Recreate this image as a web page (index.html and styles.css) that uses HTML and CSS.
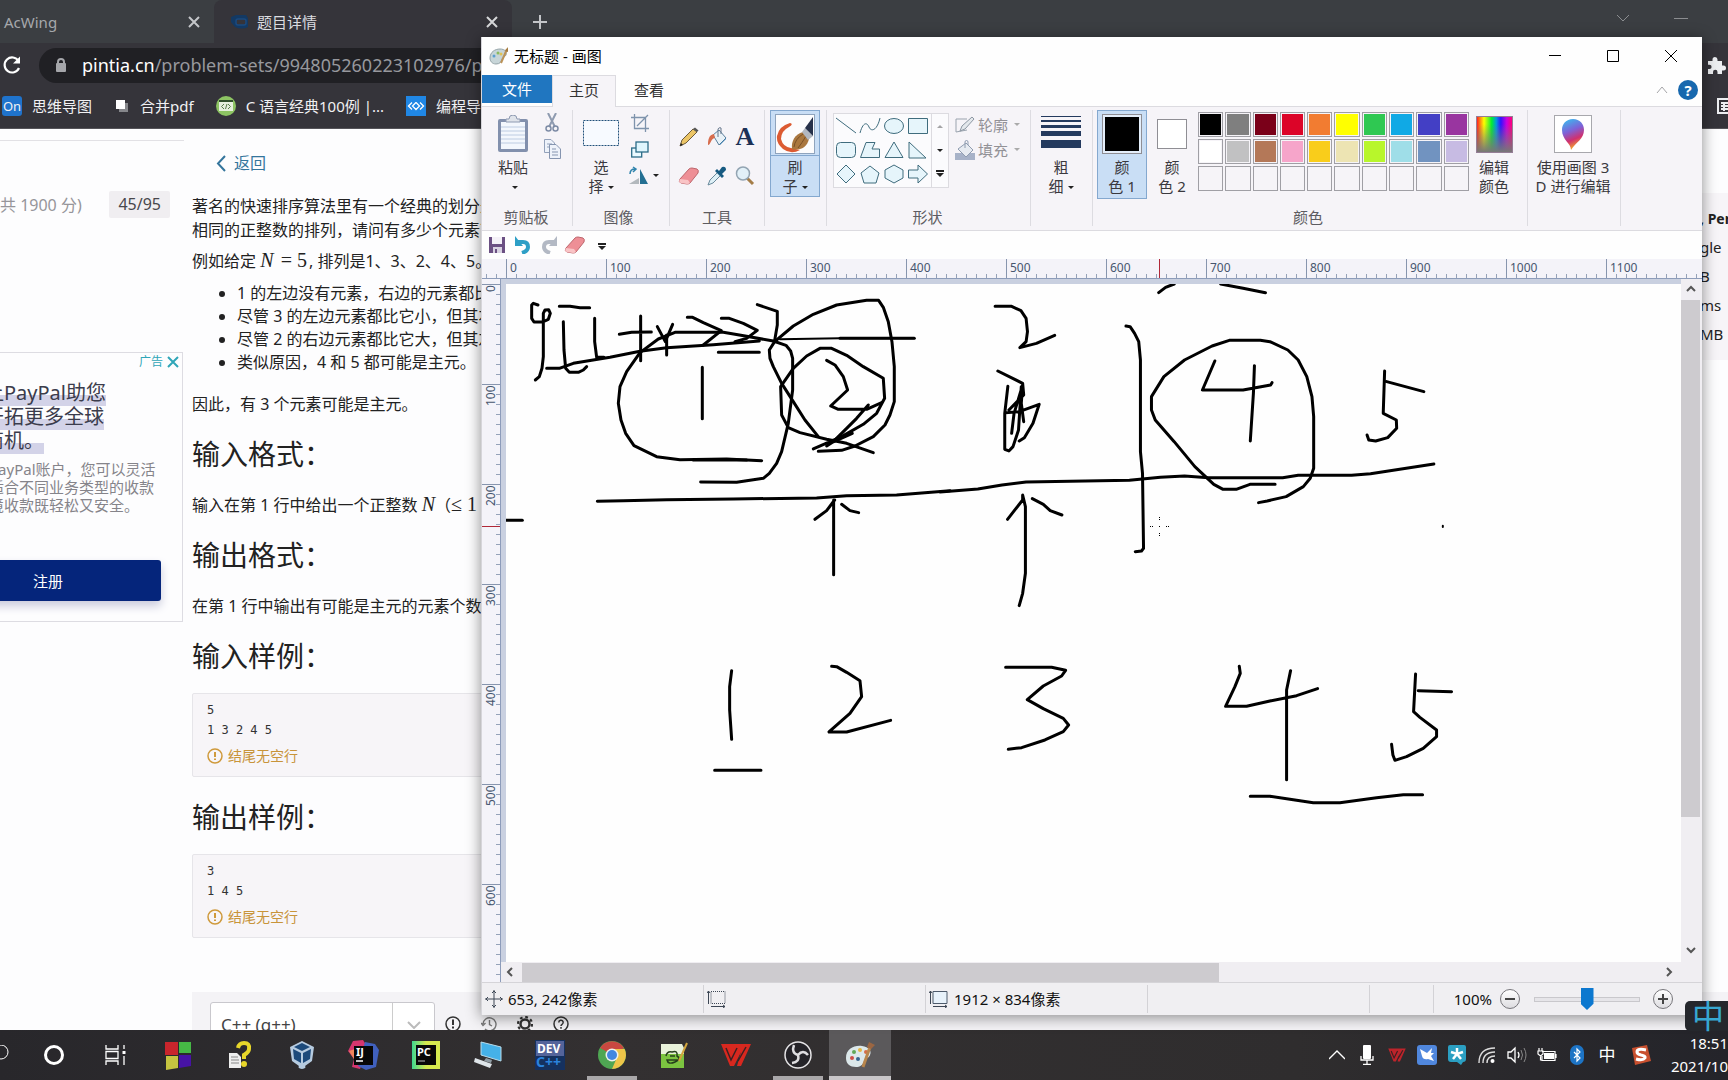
FILE: index.html
```html
<!DOCTYPE html>
<html lang="zh-CN">
<head>
    <meta charset="UTF-8">
    <meta name="viewport" content="width=device-width, initial-scale=1.0">
    <title>题目详情</title>
    <link rel="stylesheet" href="styles.css">
</head>
<body>
    <div class="desktop">
        <!-- Browser -->
        <div class="browser">
            <div class="tab-strip">
                <div class="tab">
                    <span class="tab-title">AcWing</span>
                    <button class="tab-close" aria-label="关闭"><svg width="12" height="12" viewBox="0 0 12 12"><path d="M1 1L11 11M11 1L1 11" stroke="#c4c6c9" stroke-width="2"/></svg></button>
                </div>
                <div class="tab active">
                    <svg width="20" height="18" viewBox="0 0 20 18"><path d="M1 4L6 2H16L18 5V14Q12 17 5 14L1 9z" fill="#133963"/><rect x="6" y="6" width="10" height="6" rx="2" fill="#35343a" stroke="#1a4a80" stroke-width="1.500"/></svg>
                    <span class="tab-title">题目详情</span>
                    <button class="tab-close" aria-label="关闭"><svg width="12" height="12" viewBox="0 0 12 12"><path d="M1 1L11 11M11 1L1 11" stroke="#d6d7d9" stroke-width="2"/></svg></button>
                </div>
                <button class="new-tab" aria-label="新标签页"><svg width="14" height="14" viewBox="0 0 14 14"><path d="M7 0V14M0 7H14" stroke="#c4c6c9" stroke-width="2"/></svg></button>
                <div class="browser-controls">
                    <svg width="14" height="8" viewBox="0 0 14 8"><path d="M1 1L7 7L13 1" fill="none" stroke="#8b8d90"/></svg>
                    <svg width="14" height="8" viewBox="0 0 14 8"><path d="M0 4.500H14" stroke="#8b8d90"/></svg>
                </div>
            </div>
            <div class="toolbar">
                <button class="reload" aria-label="刷新"><svg width="20" height="20" viewBox="0 0 20 20"><path d="M16.500 6A7.500 7.500 0 1 0 17 13" fill="none" stroke="#fff" stroke-width="2.200"/><path d="M18 1.500V8.500H11z" fill="#fff"/></svg></button>
                <div class="omnibox">
                    <svg width="12" height="15" viewBox="0 0 12 15"><rect x="1" y="5" width="10" height="9" rx="1" fill="#a5a6aa"/><path d="M3 6V4a3 3 0 0 1 6 0V6" fill="none" stroke="#a5a6aa" stroke-width="2"/></svg>
                    <span class="url"><b>pintia.cn</b>/problem-sets/994805260223102976/p</span>
                </div>
                <svg class="puzzle" width="20" height="20" viewBox="0 0 20 20"><path d="M2 6H6.500V4.500a2.500 2.500 0 0 1 5 0V6H16v4.500h1.500a2.500 2.500 0 0 1 0 5H16V19H11.500V17a2.200 2.200 0 0 0-4.500 0V19H2V14H3.500a2 2 0 0 0 0-4.200H2z" fill="#eceef1"/></svg>
            </div>
            <div class="bookmarks">
                <a href="#" class="mark"><span class="on-icon">On</span>思维导图</a>
                <a href="#" class="mark"><svg width="16" height="12" viewBox="-2 0 16 12"><rect x="3" y="3" width="9" height="9" fill="#85868a"/><rect width="9" height="9" fill="#fff"/></svg>合并pdf</a>
                <a href="#" class="mark"><svg width="20" height="20" viewBox="0 0 20 20"><circle cx="10" cy="10" r="10" fill="#8dc463"/><path d="M3 5H17V15H3z" fill="#e5efdc"/><path d="M3 4H17V6H3z" fill="#31502a"/><path d="M8 8L5.500 10.500L8 13M12 8L14.500 10.500L12 13M11 8L9.500 13" fill="none" stroke="#5b7d4b"/></svg>C 语言经典100例 |...</a>
                <a href="#" class="mark"><svg width="20" height="20" viewBox="0 0 20 20"><rect width="20" height="20" fill="#2087e5"/><path d="M6 6.500L2.500 10L6 13.500M10 6.500L6.500 10L10 13.500L13.500 10L10 6.500M14 6.500L17.500 10L14 13.500" fill="none" stroke="#fff" stroke-width="1.300"/></svg>编程导航</a>
                <svg class="reading-list" width="16" height="16" viewBox="0 0 16 16"><path d="M1 1H15V15H1zM4 5H13M4 8H13M4 11H13M7 4V13" fill="none" stroke="#eceef1" stroke-width="2"/></svg>
            </div>

            <div class="page">
                <aside class="sidebar">
                    <div class="score-row">
                        <span>共 1900 分)</span>
                        <span class="score-badge">45/95</span>
                    </div>
                    <div class="ad">
                        <div class="ad-mark">广告 <svg width="12" height="12" viewBox="0 0 12 12"><path d="M1 1L11 11M11 1L1 11" stroke="#2fa6b8" stroke-width="2"/></svg></div>
                        <p class="ad-title"><mark>让PayPal助您</mark><br><mark>开拓更多全球</mark><br><mark>商机。</mark></p>
                        <p class="ad-text">PayPal账户，您可以灵活<br>适合不同业务类型的收款<br>境收款既轻松又安全。</p>
                        <button class="ad-button">注册</button>
                    </div>
                </aside>
                <main class="problem">
                    <div class="problem-row">
                        <article>
                            <a href="#" class="back"><svg width="10" height="17" viewBox="0 0 10 17"><path d="M9 1L2 8.500L9 16" fill="none" stroke="#34759c" stroke-width="2"/></svg>返回</a>
                            <p class="intro">著名的快速排序算法里有一个经典的划分过<br>相同的正整数的排列，请问有多少个元素可</p>
                            <p class="example">例如给定 <i>N</i> <span class="math">= 5</span>, 排列是1、3、2、4、5。</p>
                            <ul>
                                <li>1 的左边没有元素，右边的元素都比</li>
                                <li>尽管 3 的左边元素都比它小，但其右</li>
                                <li>尽管 2 的右边元素都比它大，但其左</li>
                                <li>类似原因，4 和 5 都可能是主元。</li>
                            </ul>
                            <p>因此，有 3 个元素可能是主元。</p>
                            <h2>输入格式：</h2>
                            <p>输入在第 1 行中给出一个正整数 <i>N</i>（<span class="math">≤ 1</span></p>
                            <h2>输出格式：</h2>
                            <p>在第 1 行中输出有可能是主元的元素个数</p>
                            <h2>输入样例：</h2>
                            <div class="sample">
                                <pre>5
1 3 2 4 5</pre>
                                <div class="warn"><svg width="16" height="16" viewBox="0 0 16 16"><circle cx="8" cy="8" r="7" fill="none" stroke="#cf9a3c" stroke-width="1.500"/><path d="M8 4V9M8 10.500V12" stroke="#cf9a3c" stroke-width="2"/></svg>结尾无空行</div>
                            </div>
                            <h2>输出样例：</h2>
                            <div class="sample">
                                <pre>3
1 4 5</pre>
                                <div class="warn"><svg width="16" height="16" viewBox="0 0 16 16"><circle cx="8" cy="8" r="7" fill="none" stroke="#cf9a3c" stroke-width="1.500"/><path d="M8 4V9M8 10.500V12" stroke="#cf9a3c" stroke-width="2"/></svg>结尾无空行</div>
                            </div>
                        </article>
                        <aside class="info">
                            <div><strong>, Per</strong></div>
                            <div>gle</div>
                            <div>B</div>
                            <div>ms</div>
                            <div>MB</div>
                        </aside>
                    </div>
                    <div class="editor-bar">
                        <div class="lang">
                            <select aria-label="语言"><option>C++ (g++)</option></select>
                            <svg width="14" height="8" viewBox="0 0 14 8"><path d="M1 1L7 7L13 1" fill="none" stroke="#bbb" stroke-width="2"/></svg>
                        </div>
                        <button aria-label="提示"><svg width="16" height="16" viewBox="0 0 16 16"><circle cx="8" cy="8" r="7" fill="none" stroke="#333" stroke-width="1.500"/><path d="M8 3.500V9M8 10.500V12.500" stroke="#333" stroke-width="2"/></svg></button>
                        <button aria-label="历史"><svg width="16" height="16" viewBox="0 0 16 16"><path d="M2 8A6.500 6.500 0 1 1 4 13M0 7L2 9.500L4.500 7M8.500 4V8.500L11 10" fill="none" stroke="#777" stroke-width="1.400"/></svg></button>
                        <button aria-label="设置"><svg width="16" height="16" viewBox="0 0 16 16"><circle cx="8" cy="8" r="4.500" fill="none" stroke="#333" stroke-width="2.500"/><circle cx="8" cy="8" r="7" fill="none" stroke="#333" stroke-width="2.200" stroke-dasharray="2.750 2.750"/></svg></button>
                        <button aria-label="帮助"><svg width="16" height="16" viewBox="0 0 16 16"><circle cx="8" cy="8" r="7" fill="none" stroke="#333" stroke-width="1.500"/><path d="M5.800 6.500a2.200 2.200 0 1 1 3.300 1.800Q8 9 8 10M8 11V12.700" fill="none" stroke="#333" stroke-width="1.500"/></svg></button>
                    </div>
                </main>
            </div>
        </div>

        <!-- Paint -->
        <div class="paint">
            <div class="title-bar">
                <svg width="20" height="18" viewBox="0 0 20 18"><path d="M1 11C1 5 6 2 11 2c5 0 7 3 6 6-1 2-3 2-4 4-1 3-2 5-6 5-4 0-6-3-6-6z" fill="#c7d5d8" stroke="#95a4a8"/><circle cx="5" cy="9" r="1.500" fill="#5b9fd0"/><circle cx="9" cy="6" r="1.500" fill="#8abb5e"/><circle cx="12" cy="7" r="1.500" fill="#e0c254"/><path d="M12 16L18 2" stroke="#bb9257" stroke-width="2"/><path d="M16 4L19 0V5z" fill="#a47a3f"/></svg>
                <span>无标题 - 画图</span>
                <div class="win-controls">
                    <button aria-label="最小化"><svg width="12" height="12" viewBox="0 0 12 12"><path d="M0 5.500H12" stroke="#000"/></svg></button>
                    <button aria-label="最大化"><svg width="12" height="12" viewBox="0 0 12 12"><path d="M.5 .5H11.500V11.500H.5z" fill="none" stroke="#000"/></svg></button>
                    <button aria-label="关闭"><svg width="12" height="12" viewBox="0 0 12 12"><path d="M0 0L12 12M12 0L0 12" stroke="#000"/></svg></button>
                </div>
            </div>
            <div class="ribbon-tabs">
                <button class="file-tab">文件</button>
                <button class="ribbon-tab current">主页</button>
                <button class="ribbon-tab">查看</button>
                <svg class="collapse" width="12" height="8" viewBox="0 0 12 8"><path d="M1 7L6 1L11 7" fill="none" stroke="#a5a5a8"/></svg>
                <button class="help">?</button>
            </div>

            <div class="ribbon">
                <section class="group clipboard">
                    <div class="group-body">
                        <button class="big">
                            <span class="pic"><svg width="32" height="38" viewBox="0 0 32 38"><rect x="1" y="4" width="30" height="33" rx="2" fill="#8290ad"/><rect x="4" y="7" width="24" height="27" fill="#f3f7fd"/><path d="M4 12H28M4 16H28M4 20H28M4 24H28M4 28H28" stroke="#bdcce2"/><path d="M9 7V4H12A4 4 0 0 1 20 4H23V7z" fill="#dfe3ea" stroke="#8e9ab2"/></svg></span>
                            <span>粘贴<br><i class="caret"></i></span>
                        </button>
                        <div class="small-col">
                            <button aria-label="剪切"><svg width="14" height="20" viewBox="0 0 14 20"><path d="M3 0L10 14M11 0L4 14" stroke="#8f9bb0" stroke-width="2"/><circle cx="3.500" cy="15.500" r="2.500" fill="none" stroke="#7e8ca6" stroke-width="1.500"/><circle cx="10.500" cy="15.500" r="2.500" fill="none" stroke="#7e8ca6" stroke-width="1.500"/></svg></button>
                            <button aria-label="复制"><svg width="17" height="20" viewBox="0 0 17 20"><path d="M.5 .5H7L10.500 4V13.500H.5zM3 5H8M3 8H8" fill="#eef2fa" stroke="#93a1ba"/><path d="M5.500 5.500H12L16.500 10V19.500H5.500zM8 10H12M8 13H14M8 16H14" fill="#eef2fa" stroke="#8695b0"/></svg></button>
                        </div>
                    </div>
                    <div class="group-name">剪贴板</div>
                </section>

                <section class="group image">
                    <div class="group-body">
                        <button class="big">
                            <span class="pic"><svg width="36" height="28" viewBox="0 0 36 28"><rect x=".5" y=".5" width="35" height="25" fill="#f7faff" stroke="#20507a" stroke-dasharray="2 1"/></svg></span>
                            <span>选<br>择<i class="caret"></i></span>
                        </button>
                        <div class="small-col">
                            <button aria-label="裁剪"><svg width="18" height="18" viewBox="0 0 18 18"><path d="M3.500 0V14.500H18M0 3.500H14.500V18M6 12L17 1" fill="none" stroke="#7e93ac" stroke-width="1.300"/></svg></button>
                            <button aria-label="调整大小"><svg width="18" height="17" viewBox="0 0 18 17"><rect x=".7" y="7" width="10" height="9" fill="#e9f9ff" stroke="#2b6c88" stroke-width="1.300"/><rect x="5" y="1" width="12" height="10" fill="#dff5fd" stroke="#2b6c88" stroke-width="1.300"/></svg></button>
                            <button class="rotate"><svg width="20" height="18" viewBox="0 0 20 18"><path d="M0 18H10V12z" fill="#b3b8bd"/><path d="M11 18V3L19 18z" fill="#246f92"/><path d="M1 8Q1 3 6 3M4 1L7 3L4 6" fill="none" stroke="#2f83ac" stroke-width="1.500"/></svg><i class="caret"></i></button>
                        </div>
                    </div>
                    <div class="group-name">图像</div>
                </section>

                <section class="group tools">
                    <div class="group-body tool-grid">
                        <button aria-label="铅笔"><svg width="20" height="20" viewBox="0 0 20 20"><path d="M1 19L3 13L14 2L18 5L7 16z" fill="#ecc566" stroke="#6b5a3c"/><path d="M14 2L16 .5L19.500 3.500L18 5z" fill="#555"/><path d="M1 19L2 16L4 18z" fill="#222"/></svg></button>
                        <button aria-label="填充"><svg width="22" height="20" viewBox="0 0 22 20"><path d="M7 8L13 3L20 11L13 18z" fill="#e8f1f7" stroke="#5a7f9d"/><path d="M12 10V3a2 2 0 0 1 3-2V7" fill="none" stroke="#64758a"/><path d="M8 7C3 8 2 12 2 18 5 18 4 12 9 11z" fill="#d76d4e"/><path d="M14 17L20 11V12L14 18z" fill="#2e79ad"/></svg></button>
                        <button class="text-tool" aria-label="文本">A</button>
                        <button aria-label="橡皮擦"><svg width="22" height="18" viewBox="0 0 22 18"><path d="M2 12L11 2Q12 1 14 1L19 2Q21 3 20 6L12 16Q11 17 9 17L3 16Q0 15 2 12z" fill="#ee8f96" stroke="#bd666d"/><path d="M2 12L10 13L12 16Q11 17 9 17L3 16Q0 15 2 12z" fill="#f9c4c6"/></svg></button>
                        <button aria-label="取色"><svg width="20" height="20" viewBox="0 0 20 20"><path d="M1 19L3 14L11 6L14 9L6 17z" fill="#dff0f7" stroke="#69899b"/><path d="M8 5L10 3L12 5L15 1Q19 0 19 4L15 8L17 10L15 12z" fill="#175a81"/></svg></button>
                        <button aria-label="放大镜"><svg width="20" height="20" viewBox="0 0 20 20"><path d="M12 12L18 18" stroke="#a47d48" stroke-width="3"/><circle cx="8" cy="7.500" r="6.500" fill="#e2f0f8" stroke="#93a4b2" stroke-width="1.500"/></svg></button>
                    </div>
                    <div class="group-name">工具</div>
                </section>

                <section class="group brushes">
                    <div class="group-body">
                        <button class="big pressed split">
                            <span class="pic"><svg width="40" height="40" viewBox="0 0 40 40"><rect x=".5" y=".5" width="39" height="39" fill="#fcfcfd" stroke="#8fa4bd"/><path d="M15 9Q19 10 14 13Q6 17 6 25Q8 33 16 34L25 36Q16 41 8 35Q1 29 2 22Q4 12 15 9z" fill="#dc5b32"/><path d="M17 35C16 27 20 20 28 18L34 25C32 33 26 37 17 35z" fill="#a9773f"/><path d="M19 33Q20 25 28 20M23 34Q27 29 31 22" fill="none" stroke="#795128"/><path d="M27 18L30 14L38 22L33 26z" fill="#b2b8c1"/><path d="M30 14L38 3V22z" fill="#27314a"/></svg></span>
                            <span>刷<br>子<i class="caret"></i></span>
                        </button>
                    </div>
                </section>

                <section class="group shapes">
                    <div class="group-body">
                        <div class="gallery">
                            <div class="shape-grid">
                                <svg viewBox="0 0 20 16"><path d="M0 0L20 15"/></svg>
                                <svg viewBox="0 0 20 16"><path d="M0 15C3 4 7 4 9 9S17 13 20 0"/></svg>
                                <svg viewBox="0 0 20 16"><ellipse cx="10" cy="8" rx="9.500" ry="7.500"/></svg>
                                <svg viewBox="0 0 20 16"><path d="M.5 .5H19.500V15.500H.5z"/></svg>
                                <svg viewBox="0 0 20 16"><rect x=".5" y=".5" width="19" height="15" rx="4"/></svg>
                                <svg viewBox="0 0 20 16"><path d="M6 .5H15L12 7H19.500V15.500H.5z"/></svg>
                                <svg viewBox="0 0 20 16"><path d="M10 0L19 15.500H1z"/></svg>
                                <svg viewBox="0 0 20 16"><path d="M1 0L18 16H1z"/></svg>
                                <svg viewBox="0 0 20 16"><path d="M10 -1L19 8L10 17L1 8z"/></svg>
                                <svg viewBox="0 0 20 16"><path d="M10 0L19 7L16 17H4L1 7z"/></svg>
                                <svg viewBox="0 0 20 16"><path d="M10 -1L19 4V12L10 17L1 12V4z"/></svg>
                                <svg viewBox="0 0 20 16"><path d="M.5 4H10V-1L19.500 8L10 17V12H.5z"/></svg>
                            </div>
                            <div class="gallery-scroll"><i class="caret up"></i><i class="caret"></i><i class="caret more"></i></div>
                        </div>
                        <div class="shape-style">
                            <button><svg width="20" height="18" viewBox="0 0 20 18"><path d="M12 3H1V16L12 14" fill="none" stroke="#9aa3ae"/><path d="M5 15L7 10L17 1L19 3L10 13z" fill="#e4e8ec" stroke="#8d97a3"/></svg>轮廓<i class="caret"></i></button>
                            <button><svg width="20" height="20" viewBox="0 0 20 20"><rect y="13" width="20" height="7" fill="#a7b2c8"/><path d="M3 9L11 3L18 10L11 17z" fill="#e7ebf1" stroke="#8f9cb0"/><path d="M10 8V2a1.500 1.500 0 0 1 3 0V5" fill="none" stroke="#8f9cb0"/></svg>填充<i class="caret"></i></button>
                        </div>
                    </div>
                    <div class="group-name">形状</div>
                </section>

                <section class="group size">
                    <div class="group-body">
                        <button class="big">
                            <span class="pic"><svg width="40" height="36" viewBox="0 0 40 36"><path d="M0 0H40V1H0zM0 4H40V6H0zM0 9H40V12H0zM0 15H40V20H0zM0 24H40V32H0z" fill="#243a5e"/></svg></span>
                            <span>粗<br>细<i class="caret"></i></span>
                        </button>
                    </div>
                </section>

                <section class="group colors">
                    <div class="group-body">
                        <button class="big pressed"><span class="pic"><span class="swatch first"></span></span><span>颜<br>色 1</span></button>
                        <button class="big"><span class="pic"><span class="swatch"></span></span><span>颜<br>色 2</span></button>
                        <div class="palette">
                            <button class="black"></button><button class="gray"></button><button class="maroon"></button><button class="red"></button><button class="orange"></button><button class="yellow"></button><button class="green"></button><button class="azure"></button><button class="indigo"></button><button class="purple"></button>
                            <button class="white"></button><button class="silver"></button><button class="brown"></button><button class="pink"></button><button class="gold"></button><button class="cream"></button><button class="lime"></button><button class="aqua"></button><button class="steel"></button><button class="lavender"></button>
                            <button></button><button></button><button></button><button></button><button></button><button></button><button></button><button></button><button></button><button></button>
                        </div>
                        <button class="big"><span class="pic"><span class="rainbow"></span></span><span>编辑<br>颜色</span></button>
                    </div>
                    <div class="group-name">颜色</div>
                </section>

                <section class="group paint3d">
                    <div class="group-body">
                        <button class="big">
                            <span class="pic"><svg width="38" height="38" viewBox="0 0 38 38"><defs><linearGradient id="drop" x1="0" y1="0" x2="0.300" y2="1"><stop offset="0" stop-color="#31c6f2"/><stop offset=".45" stop-color="#7d62d8"/><stop offset=".75" stop-color="#d0306f"/><stop offset="1" stop-color="#f0a030"/></linearGradient></defs><rect x=".5" y=".5" width="37" height="37" fill="#fff" stroke="#a8a8ad"/><path d="M19 4C26 4 30 9 30 15C30 24 22 27 17 35C17 28 8 25 8 15C8 9 12 4 19 4z" fill="url(#drop)"/></svg></span>
                            <span>使用画图 3<br>D 进行编辑</span>
                        </button>
                    </div>
                </section>
            </div>

            <div class="quick-access">
                <button aria-label="保存"><svg width="16" height="16" viewBox="0 0 16 16"><path d="M0 0H16V16H0z" fill="#6b5083"/><path d="M3 0H13V7H3z" fill="#f4f1f7"/><path d="M4 10H13V16H4z" fill="#d9d3e2"/><path d="M6 12H8V16H6z" fill="#6b5083"/></svg></button>
                <button aria-label="撤消"><svg width="18" height="18" viewBox="0 0 18 18"><path d="M3 6H9Q14 6 14 11Q14 15 8 17" fill="none" stroke="#2e9fc6" stroke-width="4"/><path d="M1 0V10L9 10z" fill="#2e9fc6"/></svg></button>
                <button aria-label="重做"><svg width="18" height="18" viewBox="0 0 18 18"><path d="M15 6H9Q4 6 4 11Q4 15 10 17" fill="none" stroke="#b3b9c4" stroke-width="4"/><path d="M17 0V10L9 10z" fill="#b3b9c4"/></svg></button>
                <button aria-label="橡皮擦"><svg width="22" height="18" viewBox="0 0 22 18"><path d="M2 12L11 2Q12 1 14 1L19 2Q21 3 20 6L12 16Q11 17 9 17L3 16Q0 15 2 12z" fill="#ee8f96" stroke="#bd666d"/><path d="M2 12L10 13L12 16Q11 17 9 17L3 16Q0 15 2 12z" fill="#f9c4c6"/></svg></button>
                <i class="caret more"></i>
            </div>

            <div class="ruler">
                <span>0</span><span>100</span><span>200</span><span>300</span><span>400</span><span>500</span><span>600</span><span>700</span><span>800</span><span>900</span><span>1000</span><span>1100</span>
                <div class="ruler-marker"></div>
            </div>

            <div class="workspace">
                <div class="ruler-side">
                    <span>0</span><span>100</span><span>200</span><span>300</span><span>400</span><span>500</span><span>600</span>
                    <div class="ruler-marker"></div>
                </div>
                <div class="canvas">
                    <svg class="ink" width="100%" height="100%">
                        <!-- first row, left half -->
                        <g transform="translate(-26 -14) scale(.3333)">
                            <path d="M72 751H127"/>
                            <path d="M174 105L160 100L155 105V145L162 156H188L205 148L211 130L206 119L195 120L190 130V260L186 295L178 320L166 330"/>
                            <path d="M238 109H270L300 113H329M250 155L252 240L257 295L268 307H295L310 300L320 290M344 145V215L350 262H372"/>
                            <path d="M200 295H238L280 280L390 262L480 244L560 233L700 224L838 213"/>
                            <path d="M418 193L455 187L514 186M482 138V272M532 170L556 215L578 163M560 195V255"/>
                            <path d="M622 142H638L670 158L724 182L670 225M724 145H748L790 160L832 181L800 205L765 215M715 247H838"/>
                            <path d="M832 104L892 124V165L884 212"/>
                            <path d="M662 636L770 637L850 625L868 610L890 580L905 545L925 460L938 360V265L932 243L918 226L880 213L800 199L730 187H585L535 207L480 248L440 305L420 350L415 400L423 450L437 490L462 527L530 560L600 569L740 567L845 572"/>
                            <path d="M640 570H800M667 292V446"/>
                            <path d="M1303 205H1080L900 208" class="thin"/>
                            <path d="M1303 205H1080"/>
                            <path d="M1015 544L1085 541L1125 528L1180 500L1215 465L1230 435L1243 395V290L1236 215L1225 155L1210 112L1196 91H1160L1070 105L1000 133L940 168L884 215L868 240L870 265L880 290L905 340L940 395L975 450L1015 500"/>
                            <path d="M1180 548L1100 520L1040 508L960 488L925 473L905 435L902 350L940 295L980 258L1020 235H1055L1100 256L1150 290L1210 325L1214 385L1190 430L1150 463L1085 500L1000 537"/>
                            <path d="M1040 271L1065 285L1090 320L1103 360L1052 408L1075 418H1160L1205 398M1165 405L1130 445L1100 475L1060 515L1040 528M1117 490L1050 520"/>
                            <path d="M352 694L430 692L560 689L760 687L1010 684L1100 677L1250 675L1410 662"/>
                            <path d="M1061 690V914M1005 748L1040 722L1064 690M1085 703L1110 722L1136 728"/>
                        </g>
                        <!-- first row, right half -->
                        <g transform="translate(434 -14) scale(.3444 .3333)">
                            <path d="M160 109H208L235 122L250 145L254 185L250 215L232 233L280 220L333 196"/>
                            <path d="M168 303L240 340L243 375L200 420M197 349L188 430V538L200 543L212 530L228 480L236 350M208 490L215 430L240 345L236 400L243 455M190 428L230 425L288 403L270 460L245 503L230 513"/>
                            <path d="M540 168L552 170L565 190L577 215L582 270V545L588 610L591 835L585 843L567 845"/>
                            <path d="M635 68L655 52L680 42M815 42L880 55L945 68"/>
                            <path d="M973 643H900L860 658H822L795 643L740 590L680 515L625 450L614 420V380L650 320L710 270L790 228L840 211H930L958 215L1010 240L1040 270L1065 320L1080 380L1085 440V595L1075 625L1055 650L1005 680L950 693L925 698"/>
                            <path d="M798 273L762 360H880L960 345L964 338M913 287L910 370L901 513"/>
                            <path d="M1291 303L1287 430L1325 450L1326 475L1300 503L1265 513L1245 510L1240 495M1297 335L1405 365"/>
                            <path d="M0 666L110 657L180 645L250 636L550 631L640 622L710 618L780 623H995L1040 616H1195L1250 611L1434 582"/>
                            <path d="M196 748L240 690V675L248 710V910L240 970L230 1007M268 686L300 703L320 722L354 735"/>
                            <path d="M1460 767V771" class="thin"/>
                        </g>
                        <!-- second row -->
                        <g transform="translate(-26 356) scale(.3333)">
                            <path d="M755 92L749 140V210L755 298M704 391H843"/>
                            <path d="M1055 79L1070 80L1100 97L1140 122L1145 170L1110 220L1047 276H1100L1232 241"/>
                            <path d="M1577 82H1715L1757 91L1745 108L1690 138L1642 179L1690 206L1750 235L1766 255L1750 275L1695 300L1625 323L1585 328"/>
                            <path d="M2278 79L2281 100L2265 140L2237 199H2300L2370 183L2450 167L2513 146M2432 92L2420 150V419"/>
                            <path d="M2807 102L2801 215L2820 232L2870 270V290L2830 325L2780 350L2745 361L2739 345L2735 313M2815 152L2915 155"/>
                            <path d="M2311 469H2370L2450 481L2500 488H2580L2690 473L2770 464H2828"/>
                        </g>
                        <path class="cursor" d="M653.500 233V236M653.500 249V252M644 242.500H647M660 242.500H663M653.500 242V243"/>
                    </svg>
                </div>
                <div class="scroll-y">
                    <svg width="10" height="8" viewBox="0 0 10 8"><path d="M1 6L5 2L9 6" fill="none" stroke="#555" stroke-width="2"/></svg>
                    <div class="thumb"></div>
                    <svg width="10" height="8" viewBox="0 0 10 8"><path d="M1 2L5 6L9 2" fill="none" stroke="#555" stroke-width="2"/></svg>
                </div>
                <div class="scroll-x">
                    <svg width="8" height="10" viewBox="0 0 8 10"><path d="M6 1L2 5L6 9" fill="none" stroke="#555" stroke-width="2"/></svg>
                    <div class="thumb"></div>
                    <svg width="8" height="10" viewBox="0 0 8 10"><path d="M2 1L6 5L2 9" fill="none" stroke="#555" stroke-width="2"/></svg>
                </div>
            </div>

            <div class="status-bar">
                <div class="cell"><svg width="18" height="18" viewBox="0 0 18 18"><path d="M9 0V18M0 9H18M7 3L9 1L11 3M7 15L9 17L11 15M3 7L1 9L3 11M15 7L17 9L15 11" fill="none" stroke="#3c4654"/></svg>653, 242像素</div>
                <div class="cell"><svg width="20" height="18" viewBox="0 0 20 18"><path d="M4 1.500H18V13.500H4z" fill="none" stroke="#3c4654" stroke-dasharray="1 1"/><path d="M1.500 1V14M0 3L1.500 1L3 3M4 16.500H18M16 15L18 16.500L16 18" fill="none" stroke="#3c4654"/></svg></div>
                <div class="cell"><svg width="20" height="18" viewBox="0 0 20 18"><path d="M4 1.500H18V13.500H4z" fill="#e8f2fb" stroke="#4d5a6b"/><path d="M1.500 1V14M0 3L1.500 1L3 3M4 16.500H18M16 15L18 16.500L16 18" fill="none" stroke="#3c4654"/></svg>1912 × 834像素</div>
                <div class="cell"></div>
                <div class="cell narrow"></div>
                <div class="zoom">
                    <label for="zoom">100%</label>
                    <button aria-label="缩小"><svg width="10" height="10" viewBox="0 0 10 10"><path d="M0 5H10" stroke="#444" stroke-width="2"/></svg></button>
                    <input type="range" id="zoom" min="0" max="100" value="50">
                    <button aria-label="放大"><svg width="10" height="10" viewBox="0 0 10 10"><path d="M0 5H10M5 0V10" stroke="#444" stroke-width="2"/></svg></button>
                </div>
            </div>
        </div>

        <div class="ime">中</div>

        <!-- Taskbar -->
        <div class="taskbar">
            <div class="task search"><svg width="16" height="20" viewBox="0 0 16 20"><circle cx="5" cy="7" r="7" fill="none" stroke="#fff"/></svg></div>
            <div class="task"><svg width="22" height="22" viewBox="0 0 22 22"><circle cx="11" cy="11" r="8.500" fill="none" stroke="#fff" stroke-width="3"/></svg></div>
            <div class="task"><svg width="22" height="20" viewBox="0 0 22 20"><path d="M1 0V4H13V0M1 20V16H13V20M1 6.500H13V13.500H1zM19 0V4M19 11V20" fill="none" stroke="#fff" stroke-width="1.300"/><path d="M17.500 6H20.500V9H17.500z" fill="#fff"/></svg></div>
            <div class="task"><svg width="28" height="30" viewBox="0 0 28 30"><path d="M1 2H14V15H1z" fill="#c9252c"/><path d="M15 2H27V13H15z" fill="#46b845"/><path d="M2 16H14V28L2 30z" fill="#c6c440"/><path d="M15 15H27V26L15 28z" fill="#4713a5"/></svg></div>
            <div class="task"><svg width="26" height="28" viewBox="0 0 26 28"><path d="M11 7Q12 2 17 2Q23 2 22 8Q22 11 17 14V18" fill="none" stroke="#e8d72a" stroke-width="4"/><circle cx="17" cy="23" r="3" fill="#e8d72a"/><path d="M2 12H10L14 16V27H2z" fill="#eee"/><path d="M4 16H11M4 19H12M4 22H12" stroke="#888"/></svg></div>
            <div class="task"><svg width="26" height="28" viewBox="0 0 26 28"><path d="M13 0L25 6L23 20L16 25Q18 27 13 28Q8 27 10 25L3 20L1 6z" fill="#b6cbe0"/><path d="M4 8L12 12V22L5 18zM22 8L14 12V22L21 18zM5 6L13 2L21 6L13 10z" fill="#1c4a7b"/></svg></div>
            <div class="task"><svg width="32" height="30" viewBox="0 0 32 30"><path d="M5 1L15 0L20 8L12 29L4 27L6 19L0 11z" fill="#d6366f"/><path d="M17 2L27 4L31 10L28 27L18 30L10 26z" fill="#4060bd"/><path d="M1 11L7 9L6 19z" fill="#ee855b"/><rect x="6" y="6" width="19" height="19" fill="#080808"/><text x="8" y="16" class="logo-text">IJ</text><path d="M8 21H15" stroke="#fff" stroke-width="1.500"/></svg></div>
            <div class="task"><svg width="28" height="28" viewBox="0 0 28 28"><defs><linearGradient id="pc"><stop offset="0" stop-color="#3fd890"/><stop offset=".5" stop-color="#d6e94e"/></linearGradient></defs><rect width="28" height="28" fill="url(#pc)"/><rect x="4" y="4" width="20" height="20" fill="#080808"/><text x="5" y="15" class="logo-text">PC</text><path d="M6 20H13" stroke="#bbb"/></svg></div>
            <div class="task"><svg width="28" height="28" viewBox="0 0 28 28"><path d="M7 1L27 6V20L7 14z" fill="#45b1e8" stroke="#b9dceb"/><path d="M12 17L18 19L17 22L10 20z" fill="#8f9ba3"/><path d="M1 17L18 23L16 27L0 21z" fill="#dfe5e9"/></svg></div>
            <div class="task"><svg width="30" height="30" viewBox="0 0 30 30"><rect width="30" height="30" fill="#15315f"/><rect x="1" y="1" width="28" height="15" fill="#54649a"/><text x="2" y="13" class="logo-text dev">DEV</text><text x="1" y="27" class="logo-text cpp">C++</text></svg></div>
            <div class="task open"><svg width="28" height="28" viewBox="0 0 28 28"><circle cx="14" cy="14" r="14" fill="#4fa653"/><path d="M14 14L2 7A14 14 0 0 1 26 7z" fill="#c94840"/><path d="M14 8H26.600A14 14 0 0 1 14 28L20 14z" fill="#eec549"/><path d="M2 7L9 18L14 14z" fill="#4fa653"/><circle cx="14" cy="14" r="6.500" fill="#eef1ee"/><circle cx="14" cy="14" r="5" fill="#4287e0"/></svg></div>
            <div class="task"><svg width="28" height="28" viewBox="0 0 28 28"><path d="M1 3H22L24 7V27H1z" fill="#e9f2da"/><path d="M1 13H24V27H1z" fill="#7cc440"/><path d="M6 15Q7 10 12 11Q18 9 17 15Q22 18 15 21Q8 24 7 19H18M10 15H15" fill="none" stroke="#263f1d" stroke-width="1.500"/><path d="M19 20L27 2" stroke="#d1a43c" stroke-width="2"/></svg></div>
            <div class="task"><svg width="30" height="24" viewBox="0 0 30 24"><path d="M0 1H30L20 23H16L20 9L13 23H9z" fill="#d8281f"/><path d="M5 5L10 17L16 5M17 18L25 4" fill="none" stroke="#3c2022" stroke-width="1.500"/></svg></div>
            <div class="task open"><svg width="28" height="28" viewBox="0 0 28 28"><circle cx="14" cy="14" r="13" fill="#242328" stroke="#e4e3e5" stroke-width="1.500"/><path d="M14 14Q7 12 10 4M14 14Q19 8 24 14M14 14Q16 21 8 22" fill="none" stroke="#dedde0" stroke-width="2.500"/></svg></div>
            <div class="task open focused"><svg width="30" height="28" viewBox="0 0 30 28"><path d="M1 17C1 8 9 4 17 5c7 1 10 5 8 9-1 3-4 3-6 6-1 4-4 6-8 6-6 0-10-3-10-9z" fill="#dce8ea"/><circle cx="7" cy="17" r="2" fill="#ce5048"/><circle cx="9" cy="11" r="2" fill="#62a858"/><circle cx="15" cy="9" r="2" fill="#e6b842"/><circle cx="21" cy="11" r="2" fill="#d66d46"/><circle cx="13" cy="18" r="2" fill="#37648f"/><path d="M18 26L25 6" stroke="#b8864c" stroke-width="3"/><path d="M22 6L24 1L30 4L26 8z" fill="#9b6642"/></svg></div>
            <div class="tray">
                <span><svg width="16" height="10" viewBox="0 0 16 10"><path d="M0 9L8 1L16 9" fill="none" stroke="#fff" stroke-width="1.300"/></svg></span>
                <span><svg width="14" height="20" viewBox="0 0 14 20"><rect x="3" width="8" height="14" rx="1" fill="#fff"/><path d="M1 11V15H13V11M7 15V19M3 19.500H11" fill="none" stroke="#fff" stroke-width="1.300"/></svg></span>
                <span><svg width="18" height="14" viewBox="0 0 30 24"><path d="M0 1H30L20 23H16L20 9L13 23H9z" fill="#bd242b"/><path d="M5 5L10 17L16 5M17 18L25 4" fill="none" stroke="#3c2022" stroke-width="2"/></svg></span>
                <span><svg width="20" height="20" viewBox="0 0 20 20"><rect width="20" height="20" rx="3" fill="#5087dd"/><path d="M3 4L10 8L15 3L14 8H17L14 11L17 16L11 14Q6 15 5 11z" fill="#fff"/></svg></span>
                <span><svg width="18" height="20" viewBox="0 0 18 20"><path d="M2 0H16Q18 0 18 2V14Q18 17 15 17L13 20L9 17H3Q0 17 0 14V2Q0 0 2 0z" fill="#2b9fc2"/><path d="M9 3V9M3 7L9 9L15 7M5 14L9 9L13 14" fill="none" stroke="#fff" stroke-width="2.500"/></svg></span>
                <span><svg width="18" height="18" viewBox="0 0 18 18"><path d="M1 17Q1 2 17 2M5 17Q5 6 17 6M9 17Q9 10 17 10" fill="none" stroke="#ddd" stroke-width="1.400"/><circle cx="14.500" cy="15" r="2" fill="#fff"/></svg></span>
                <span><svg width="20" height="18" viewBox="0 0 20 18"><path d="M1 6H4L8 2V16L4 12H1zM11 6Q13 9 11 12" fill="none" stroke="#fff" stroke-width="1.300"/><path d="M14 4Q17 9 14 14M17 2Q21 9 17 16" fill="none" stroke="#888"/></svg></span>
                <span><svg width="20" height="14" viewBox="0 0 20 14"><path d="M5 3.500H18V12.500H5V8M19 6V10M2 0V3M5 0V3M1 3H6V6L3.500 8L1 6zM3.500 8V12H5" fill="none" stroke="#fff" stroke-width="1.200"/><path d="M7 5H17V11H7z" fill="#fff"/></svg></span>
                <span><svg width="14" height="20" viewBox="0 0 14 20"><rect width="14" height="20" rx="7" fill="#1d74c5"/><path d="M4 7L10 13L7 16V4L10 7L4 13" fill="none" stroke="#fff" stroke-width="1.200"/></svg></span>
                <span class="ime-small">中</span>
                <span class="sogou"><svg width="20" height="20" viewBox="0 0 20 20"><path d="M1 3L16 0L20 16L4 20z" fill="#c9502f"/><path d="M15 5Q6 3 6 7Q6 9 10 10Q15 11 14 13Q12 16 5 14" fill="none" stroke="#fff" stroke-width="3"/></svg></span>
                <div class="clock">18:51<br>2021/10</div>
            </div>
        </div>
    </div>
</body>
</html>
```
FILE: styles.css
```css
* {
    box-sizing: border-box;
}

body {
    margin: 0;
    font-family: "Noto Sans", "Noto Sans CJK SC", sans-serif;
    font-size: 15px;
    line-height: 20px;
    color: #222;
}

button {
    font: inherit;
    color: inherit;
    background: none;
    border: none;
    padding: 0;
    margin: 0;
    display: flex;
    align-items: center;
    justify-content: center;
}

a {
    color: inherit;
    text-decoration: none;
}

svg {
    flex-shrink: 0;
    display: block;
}

.desktop {
    position: relative;
    height: 100vh;
    display: flex;
    flex-direction: column;
    overflow: hidden;
}

/* Browser */
.browser {
    flex: 1;
    min-height: 0;
    display: flex;
    flex-direction: column;
    background: #fdfdfe;
    overflow: hidden;
}

.tab-strip {
    display: flex;
    flex-shrink: 0;
    height: 43px;
    background: #3b3e42;
    color: #a6a8ac;
}

.tab {
    width: 214px;
    display: flex;
    align-items: center;
    padding: 0 14px 0 4px;
}

.tab.active {
    width: 298px;
    background: #35343a;
    border-radius: 8px 8px 0 0;
    color: #dcdde0;
    gap: 7px;
    padding: 0 14px 0 16px;
}

.tab-close {
    margin-left: auto;
}

.new-tab {
    width: 56px;
}

.browser-controls {
    margin-left: auto;
    display: flex;
    gap: 44px;
    padding: 14px 40px 0 0;
}

.toolbar {
    display: flex;
    flex-shrink: 0;
    align-items: center;
    height: 44px;
    background: #35343a;
}

.reload {
    width: 24px;
    margin-right: 15px;
}

.omnibox {
    flex: 1;
    height: 35px;
    border-radius: 18px;
    background: #202024;
    display: flex;
    align-items: center;
    gap: 15px;
    padding-left: 16px;
    font-size: 18px;
    color: #97989d;
}

.omnibox b {
    font-weight: normal;
    color: #fff;
}

.puzzle {
    margin: 0 2px 0 80px;
}

.bookmarks {
    display: flex;
    flex-shrink: 0;
    align-items: center;
    height: 42px;
    background: #35343a;
    border-bottom: 1px solid #555459;
    color: #f1f1f3;
    padding: 0 0 3px 2px;
    gap: 22px;
    white-space: nowrap;
}

.mark {
    display: flex;
    align-items: center;
    gap: 10px;
}

.on-icon {
    width: 20px;
    height: 20px;
    background: #1f73cc;
    border-radius: 3px;
    font-size: 13px;
    text-align: center;
}

.reading-list {
    margin-left: auto;
    margin-right: -5px;
}

.page {
    flex: 1;
    min-height: 0;
    display: flex;
}

.sidebar {
    width: 192px;
    flex-shrink: 0;
    overflow: hidden;
    padding: 11px 8px 0 0;
}

.score-row {
    display: flex;
    justify-content: space-between;
    align-items: center;
    border-top: 1px solid #e2e1e5;
    padding: 50px 14px 0 0;
    font-size: 16px;
    color: #96959a;
}

.score-badge {
    background: #f0eef1;
    color: #48474c;
    border-radius: 2px;
    line-height: 27px;
    padding: 0 9px;
}

.ad {
    width: 270px;
    height: 270px;
    margin: 134px 0 0 -87px;
    border: 1px solid #dddce2;
    padding: 0 21px;
}

.ad-mark {
    display: flex;
    justify-content: flex-end;
    align-items: center;
    gap: 4px;
    margin-right: -18px;
    font-size: 12px;
    line-height: 18px;
    color: #2fa6b8;
}

.ad-title {
    margin: 10px 0 0 49px;
    font-size: 20px;
    line-height: 24px;
    color: #3b3c4c;
}

.ad-title mark {
    color: inherit;
    background: linear-gradient(transparent 60%, #d3d3e8 60%);
}

.ad-text {
    margin: 7px -10px 0 54px;
    line-height: 18px;
    color: #85848a;
    white-space: nowrap;
}

.ad-button {
    width: 100%;
    height: 41px;
    margin-top: 46px;
    background: #05257b;
    color: #fff;
    border-radius: 3px;
    box-shadow: 0 5px 10px #c9cadc;
}

.problem {
    flex: 1;
    min-width: 0;
    display: flex;
    flex-direction: column;
}

.problem-row {
    display: flex;
    font-size: 16px;
    line-height: 24px;
}

article {
    flex: 1;
    padding-top: 22px;
}

.back {
    display: flex;
    align-items: center;
    gap: 8px;
    margin-left: 24px;
    color: #34759c;
}

article p {
    margin: 18px 0;
}

article .intro {
    margin: 19px 0 7px;
}

article .example {
    margin: 7px 0 9px;
}

article i,
.math {
    font-family: "Liberation Serif", serif;
    font-size: 20px;
    line-height: 20px;
}

.example .math {
    padding: 0 2px 0 3px;
}

article ul {
    margin: 9px 0 17px;
    padding-left: 45px;
    line-height: 23px;
}

article h2 {
    margin: 18px 0 16px;
    font-size: 28px;
    font-weight: normal;
    line-height: 41px;
}

.sample {
    background: #f7f5f8;
    border: 1px solid #e6e5e9;
    border-radius: 2px;
    padding: 6px 14px 10px;
    margin-bottom: 20px;
}

.sample pre {
    margin: 0;
    font-family: "DejaVu Sans Mono", monospace;
    font-size: 12px;
    line-height: 20px;
    color: #333;
}

.warn {
    display: flex;
    align-items: center;
    gap: 5px;
    margin-top: 6px;
    font-size: 14px;
    line-height: 20px;
    color: #c8943a;
}

.info {
    align-self: flex-start;
    width: 28px;
    margin-top: 64px;
    padding: 11px 0;
    overflow: hidden;
    background: #f7f5f8;
    font-size: 15px;
    line-height: 29px;
    white-space: nowrap;
}

.info strong {
    font-size: 14px;
}

.editor-bar {
    display: flex;
    flex: 1;
    align-items: flex-start;
    background: #f4f3f6;
    margin-top: 34px;
    padding: 10px 18px;
}

.editor-bar button {
    width: 36px;
    height: 44px;
}

.lang {
    display: flex;
    align-items: center;
    width: 225px;
    height: 46px;
    background: #fff;
    border: 1px solid #c9c8cd;
    border-radius: 3px;
    padding-right: 13px;
}

.lang select {
    flex: 1;
    height: 44px;
    appearance: none;
    border: none;
    border-right: 1px solid #ccc;
    background: none;
    font: inherit;
    font-size: 17px;
    color: #444;
    padding-left: 10px;
    margin-right: 14px;
}

/* Paint window floats over the browser */
.paint {
    position: absolute;
    left: 481px;
    right: 26px;
    top: 37px;
    bottom: 65px;
    display: flex;
    flex-direction: column;
    background: #fefefe;
    border-left: 1px solid #d6d5da;
    box-shadow: 0 2px 14px rgba(0, 0, 0, 0.45);
    overflow: hidden;
}

.title-bar {
    display: flex;
    flex-shrink: 0;
    align-items: center;
    gap: 5px;
    height: 38px;
    padding-left: 7px;
    color: #000;
}

.win-controls {
    display: flex;
    margin-left: auto;
}

.win-controls button {
    width: 58px;
    height: 36px;
    padding-right: 5px;
}

.ribbon-tabs {
    display: flex;
    flex-shrink: 0;
    height: 32px;
    border-bottom: 1px solid #dcdbe0;
    padding-right: 4px;
}

.file-tab {
    width: 70px;
    height: 28px;
    background: #2076c0;
    color: #fff;
}

.ribbon-tab {
    width: 66px;
    height: 32px;
    padding-bottom: 3px;
    color: #333;
}

.ribbon-tab.current {
    width: 64px;
    background: #f6f4f8;
    border: 1px solid #dcdbe0;
    border-bottom: none;
}

.collapse {
    margin: 11px 10px 0 auto;
}

.help {
    width: 20px;
    height: 20px;
    margin-top: 5px;
    border-radius: 50%;
    background: #1768ae;
    color: #fff;
    font-weight: bold;
}

.ribbon {
    display: flex;
    flex-shrink: 0;
    height: 124px;
    padding: 3px 0 4px;
    background: #f6f4f8;
    border-bottom: 1px solid #dcdbe0;
    color: #3a393e;
}

.group {
    display: flex;
    flex-direction: column;
    justify-content: space-between;
    border-right: 1px solid #dddce1;
}

.group-body {
    display: flex;
}

.group-name {
    padding-right: 8px;
    text-align: center;
    line-height: 18px;
    color: #5d5c61;
}

.tools .group-name {
    padding-right: 0;
}

.clipboard {
    width: 91px;
    padding-left: 6px;
}

.image {
    width: 97px;
    padding-left: 3px;
}

.tools {
    width: 95px;
}

.brushes,
.size {
    width: 62px;
    padding-left: 5px;
}

.shapes {
    width: 204px;
    padding-left: 6px;
}

.colors {
    width: 435px;
    padding-left: 4px;
}

.paint3d {
    width: 93px;
}

.paint3d .big {
    width: 90px;
}

.big {
    width: 50px;
    height: 89px;
    flex-direction: column;
    justify-content: flex-start;
    line-height: 19px;
    border: 1px solid transparent;
    padding-top: 3px;
    gap: 4px;
}

.big.pressed {
    background: #c9def5;
    border-color: #84a8cf;
}

.big.split {
    height: 87px;
    background: linear-gradient(#c9def5 44px, #84a8cf 44px 45px, #c9def5 45px);
}

.pic {
    height: 40px;
    display: flex;
    align-items: center;
}

.caret {
    display: inline-block;
    border: 3px solid transparent;
    border-top-color: #222;
    border-bottom: none;
    margin-left: 4px;
    vertical-align: middle;
}

.caret.up {
    transform: rotate(180deg);
}

.caret.more {
    width: 8px;
    border-width: 4px;
    border-bottom: none;
    position: relative;
}

.caret.more::before {
    content: "";
    position: absolute;
    left: -4px;
    top: -7px;
    width: 8px;
    height: 2px;
    background: #222;
}

.small-col button {
    width: 28px;
    height: 26px;
}

.small-col .rotate {
    width: 36px;
}

.tool-grid {
    display: grid;
    grid-template-columns: repeat(3, 28px);
    grid-auto-rows: 39px;
    padding: 7px 0 0 5px;
}

.text-tool {
    font: bold 26px "Liberation Serif", serif;
    color: #1c3156;
}

.gallery {
    display: flex;
    width: 116px;
    height: 75px;
    margin-top: 3px;
    background: #fbfbfd;
    border: 1px solid #dcdbe0;
}

.shape-grid {
    display: grid;
    grid-template-columns: repeat(4, 24px);
    grid-auto-rows: 24px;
    width: 98px;
    place-items: center;
    border-right: 1px solid #dcdbe0;
}

.shape-grid svg {
    width: 20px;
    height: 16px;
    overflow: visible;
    fill: #e6f5fb;
    stroke: #3f6c7d;
}

.shape-grid svg:nth-child(-n+2) {
    fill: none;
}

.gallery-scroll {
    flex: 1;
    display: flex;
    flex-direction: column;
    align-items: center;
    justify-content: space-around;
}

.gallery-scroll .caret {
    margin: 0;
}

.gallery-scroll .caret.up {
    opacity: 0.4;
}

.shape-style {
    padding: 2px 0 0 6px;
    color: #929196;
}

.shape-style button {
    height: 25px;
    gap: 3px;
    white-space: nowrap;
}

.shape-style .caret {
    border-top-color: #aaa;
    margin-left: 3px;
}

.swatch {
    width: 30px;
    height: 30px;
    background: #fff;
    border: 1px solid #8f8e94;
}

.swatch.first {
    width: 40px;
    height: 40px;
    padding: 2px;
    background: #000 content-box;
    box-shadow: inset 0 0 0 2px #e4eefa;
}

.palette {
    display: grid;
    grid-template-columns: repeat(10, 1fr);
    grid-auto-rows: 25px;
    gap: 2px;
    width: 271px;
    height: 80px;
    margin: 2px 0 0 1px;
}

.palette button {
    border: 1px solid #a09fa5;
    padding: 1px;
    background-clip: content-box;
}

.palette .black { background-color: #000; }
.palette .gray { background-color: #7f7f7f; }
.palette .maroon { background-color: #7a0019; }
.palette .red { background-color: #dc0428; }
.palette .orange { background-color: #f27c31; }
.palette .yellow { background-color: #ffff00; }
.palette .green { background-color: #2fc852; }
.palette .azure { background-color: #10a9e5; }
.palette .indigo { background-color: #433fc5; }
.palette .purple { background-color: #9935a0; }
.palette .white { background-color: #fff; }
.palette .silver { background-color: #c1c1c2; }
.palette .brown { background-color: #b47858; }
.palette .pink { background-color: #f6a5ca; }
.palette .gold { background-color: #f9cd1b; }
.palette .cream { background-color: #ede4b3; }
.palette .lime { background-color: #b8f62b; }
.palette .aqua { background-color: #9fdee8; }
.palette .steel { background-color: #7193c0; }
.palette .lavender { background-color: #c7bbe3; }

.rainbow {
    width: 37px;
    height: 37px;
    border: 1px solid #957e96;
    background:
        linear-gradient(transparent 20%, #777),
        linear-gradient(90deg, #f22, #ff0 20%, #0e3 42%, #09d 55%, #31f 68%, #c0d 85%, #f07);
}

.quick-access {
    display: flex;
    flex-shrink: 0;
    align-items: center;
    height: 28px;
    padding-left: 2px;
}

.quick-access button {
    width: 26px;
    height: 26px;
}

.quick-access .caret {
    margin: 5px 0 0 10px;
}

/* Rulers: minor ticks are drawn by the background */
.ruler {
    position: relative;
    display: flex;
    flex-shrink: 0;
    height: 20px;
    padding-left: 24px;
    border-bottom: 1px solid #8d9cba;
    background: repeating-linear-gradient(90deg, #95a2b9 0 1px, transparent 1px 10px) 4px 100% / 100% 4px no-repeat #f4f3f9;
    overflow: hidden;
    font-size: 12px;
    line-height: 17px;
    color: #47566f;
}

.ruler span {
    flex: 0 0 100px;
    border-left: 1px solid #8795ae;
    padding-left: 3px;
}

.ruler-marker {
    position: absolute;
    left: 677px;
    top: 0;
    width: 1px;
    height: 20px;
    background: #b02838;
}

.workspace {
    flex: 1;
    min-height: 0;
    display: grid;
    grid-template-columns: 19px 1fr 21px;
    grid-template-rows: 1fr 20px;
    background: #f0eef2;
}

.ruler-side {
    position: relative;
    grid-row: 1 / 3;
    padding-top: 5px;
    border-right: 1px solid #8d9cba;
    background: repeating-linear-gradient(#95a2b9 0 1px, transparent 1px 10px) 100% 5px / 4px 100% no-repeat #f4f3f9;
    overflow: hidden;
    font-size: 12px;
    line-height: 17px;
    color: #47566f;
}

.ruler-side span {
    display: block;
    width: 18px;
    height: 100px;
    writing-mode: vertical-rl;
    transform: rotate(180deg);
    text-align: right;
    border-bottom: 1px solid #8795ae;
}

.ruler-side .ruler-marker {
    left: 0;
    top: 247px;
    width: 19px;
    height: 1px;
}

.canvas {
    background: #fefefe;
    border: solid #c9d0e0;
    border-width: 5px 0 0 5px;
    overflow: hidden;
}

.ink path {
    fill: none;
    stroke: #000;
    stroke-width: 3px;
    stroke-linecap: round;
    stroke-linejoin: round;
    vector-effect: non-scaling-stroke;
}

.ink .thin {
    stroke-width: 2px;
}

.ink .cursor {
    stroke-width: 1px;
    stroke-linecap: butt;
    stroke-dasharray: 1 1;
}

.scroll-y {
    display: flex;
    flex-direction: column;
    align-items: center;
    padding: 6px 2px 8px 0;
}

.scroll-y .thumb {
    width: 19px;
    height: 517px;
    margin: 7px 0 auto;
    background: #cdcbcf;
}

.scroll-x {
    grid-column: 2;
    display: flex;
    align-items: center;
    padding: 0 8px 0 5px;
}

.scroll-x .thumb {
    width: 697px;
    height: 19px;
    margin: 0 auto 0 8px;
    background: #cdcbcf;
}

.status-bar {
    display: flex;
    flex-shrink: 0;
    height: 33px;
    background: #f0eff2;
    border-top: 1px solid #d5d4d8;
    color: #111;
}

.cell {
    display: flex;
    align-items: center;
    gap: 5px;
    width: 222px;
    margin: 2px 0;
    padding-left: 3px;
    border-right: 1px solid #d3d2d6;
}

.cell.narrow {
    width: 64px;
}

.zoom {
    flex: 1;
    display: flex;
    align-items: center;
    justify-content: flex-end;
    padding-right: 29px;
    gap: 8px;
}

.zoom button {
    width: 20px;
    height: 20px;
    border: 1px solid #77767b;
    border-radius: 50%;
    background: linear-gradient(#fff, #dddce0);
}

.zoom input {
    appearance: none;
    width: 106px;
    height: 22px;
    margin: 0 5px 0 6px;
    background: linear-gradient(#e6e5e9, #e6e5e9) center / 104px 3px no-repeat, linear-gradient(#c9c8cc, #c9c8cc) center / 100% 5px no-repeat;
}

.zoom input::-webkit-slider-thumb {
    appearance: none;
    width: 13px;
    height: 22px;
    background: #0c78cf;
    clip-path: polygon(0 0, 100% 0, 100% 72%, 50% 100%, 0 72%);
}

/* Input method badge over the corner of the screen */
.ime {
    position: absolute;
    right: 0;
    bottom: 49px;
    width: 43px;
    height: 30px;
    border-radius: 5px 0 0 5px;
    background: #25272c;
    color: #37a8d2;
    font-size: 32px;
    line-height: 30px;
    text-align: center;
    padding-left: 3px;
    z-index: 2;
}

/* Taskbar */
.taskbar {
    display: flex;
    flex-shrink: 0;
    height: 50px;
    background: linear-gradient(90deg, #28272b, #333031 35%, #2f2d2e 75%, #24242a);
    color: #fff;
}

.task {
    width: 62px;
    display: flex;
    align-items: center;
    justify-content: center;
}

.task.search {
    width: 23px;
    margin-left: -8px;
    margin-right: 8px;
}

.task.open {
    background: linear-gradient(#a9a7a9, #a9a7a9) center bottom / 50px 4px no-repeat;
}

.task.focused {
    background: linear-gradient(#c9c7c9, #c9c7c9) center bottom / 100% 4px no-repeat #5b595b;
}

.logo-text {
    font: bold 11px "Noto Sans", sans-serif;
    fill: #fff;
}

.logo-text.dev {
    font-size: 12px;
}

.logo-text.cpp {
    font-size: 14px;
    fill: #2b83dd;
}

.tray {
    display: flex;
    margin-left: auto;
}

.tray span {
    width: 30px;
    display: flex;
    align-items: center;
    justify-content: center;
}

.tray .ime-small {
    font-size: 17px;
}

.tray .sogou {
    width: 38px;
}

.clock {
    width: 68px;
    padding-top: 2px;
    text-align: right;
    line-height: 23px;
}
```
